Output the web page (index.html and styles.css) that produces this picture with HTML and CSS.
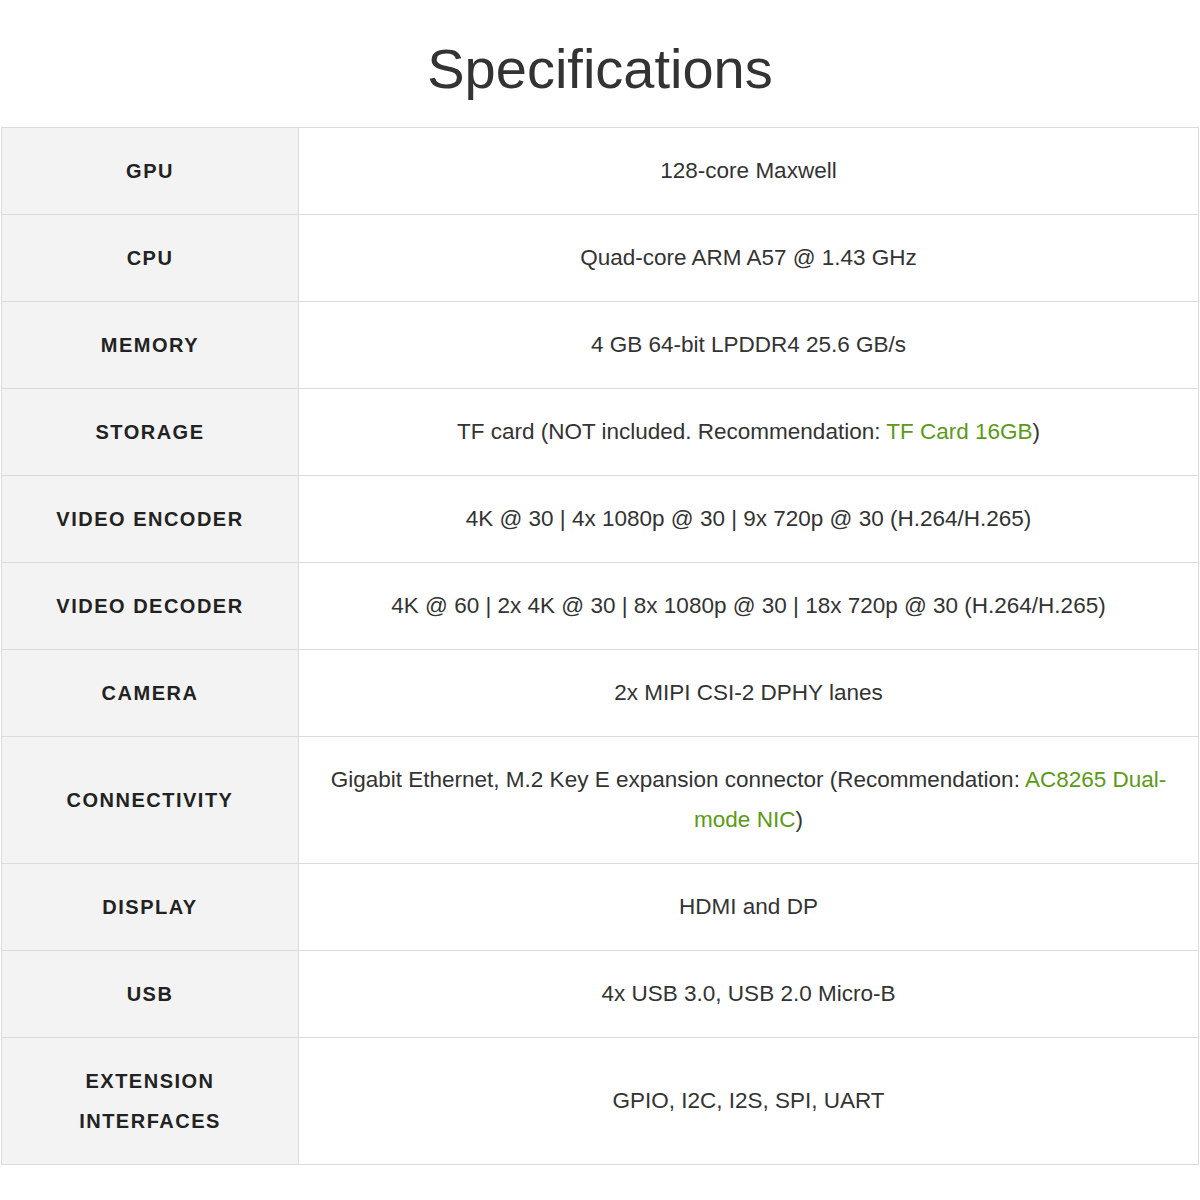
FILE: index.html
```html
<!DOCTYPE html>
<html>
<head>
<meta charset="utf-8">
<link rel="stylesheet" href="styles.css">
</head>
<body>
<h1 class="title">Specifications</h1>
<table class="specs">
<tr><th>GPU</th><td>128-core Maxwell</td></tr>
<tr><th>CPU</th><td>Quad-core ARM A57 @ 1.43 GHz</td></tr>
<tr><th>MEMORY</th><td>4 GB 64-bit LPDDR4 25.6 GB/s</td></tr>
<tr><th>STORAGE</th><td>TF card (NOT included. Recommendation: <a class="link">TF Card 16GB</a>)</td></tr>
<tr><th>VIDEO ENCODER</th><td>4K @ 30 | 4x 1080p @ 30 | 9x 720p @ 30 (H.264/H.265)</td></tr>
<tr><th>VIDEO DECODER</th><td>4K @ 60 | 2x 4K @ 30 | 8x 1080p @ 30 | 18x 720p @ 30 (H.264/H.265)</td></tr>
<tr><th>CAMERA</th><td>2x MIPI CSI-2 DPHY lanes</td></tr>
<tr><th>CONNECTIVITY</th><td>Gigabit Ethernet, M.2 Key E expansion connector (Recommendation: <a class="link">AC8265 Dual-mode NIC</a>)</td></tr>
<tr><th>DISPLAY</th><td>HDMI and DP</td></tr>
<tr><th>USB</th><td>4x USB 3.0, USB 2.0 Micro-B</td></tr>
<tr><th>EXTENSION INTERFACES</th><td>GPIO, I2C, I2S, SPI, UART</td></tr>
</table>
</body>
</html>
```
FILE: styles.css
```css
html, body {
  margin: 0;
  padding: 0;
  background: #fff;
}
body {
  font-family: "Liberation Sans", Arial, sans-serif;
  color: #333;
}
.title {
  margin: 0;
  padding: 36px 0 25px;
  text-align: center;
  font-weight: normal;
  font-size: 56px;
  line-height: 66px;
  color: #333;
}
.specs {
  margin-left: 1px;
  width: 1198px;
  border-collapse: collapse;
  line-height: 40px;
}
.specs th, .specs td {
  border: 1px solid #dcdcdc;
  text-align: center;
  vertical-align: middle;
}
.specs th {
  width: 240px;
  padding: 23px 28px;
  background: #f3f3f3;
  font-size: 20px;
  font-weight: bold;
  letter-spacing: 1.5px;
  color: #222;
}
.specs td {
  padding: 23px 30px;
  font-size: 22.5px;
  color: #333;
}
.link {
  color: #5b9a16;
  text-decoration: none;
}
```
